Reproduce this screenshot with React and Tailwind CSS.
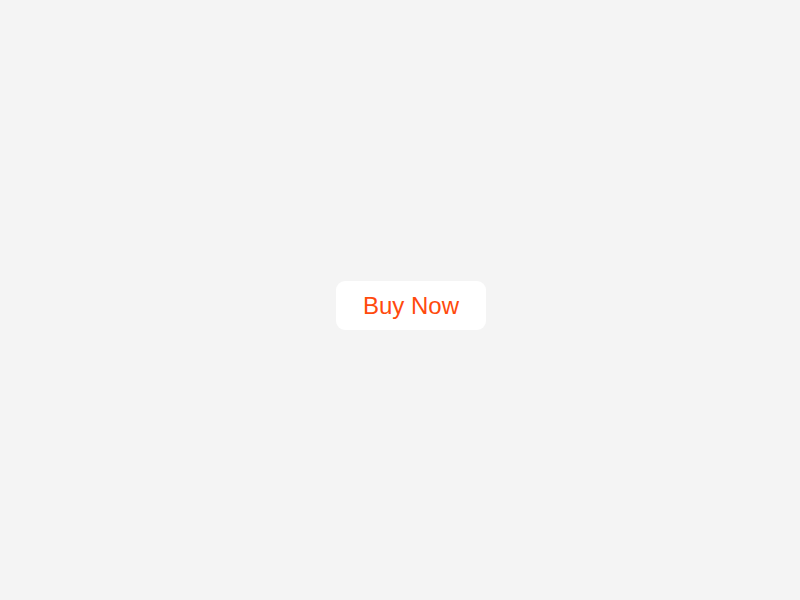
// Single call-to-action on a light grey page

function App() {
  return (
    <div className="min-h-screen bg-[#f4f4f4] flex items-center justify-center font-['Liberation_Sans',Arial,sans-serif]">
      <button className="ml-[22px] mt-[11px] w-[150px] h-[49px] bg-white rounded-[9px] text-[24px] leading-none text-[#ff4a0d]">
        Buy Now
      </button>
    </div>
  )
}

export default App
